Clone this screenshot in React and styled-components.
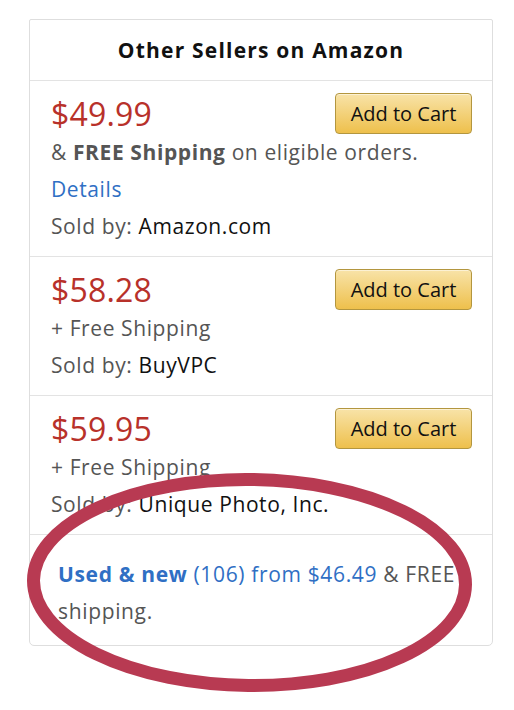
import React from 'react';
import styled, { createGlobalStyle } from 'styled-components';

const GlobalStyle = createGlobalStyle`
    body {
        margin: 0;
        background: #fff;
        font-family: "Open Sans", "Liberation Sans", sans-serif;
    }
`;

const Page = styled.div`
    position: relative;
    width: 514px;
    height: 710px;
    padding: 19px 0 0 29px;
    box-sizing: border-box;
`;

const Panel = styled.div`
    width: 464px;
    border: 1px solid #dedede;
    border-radius: 2px 2px 5px 5px;
    box-sizing: border-box;
`;

const Header = styled.div`
    height: 60px;
    display: flex;
    align-items: center;
    justify-content: center;
    font-size: 21px;
    font-weight: 700;
    letter-spacing: 1.2px;
    color: #111;
    border-bottom: 1px solid #e3e3e3;
`;

const Offer = styled.div`
    padding: 12px 20px 11px 21px;
    border-bottom: 1px solid #e3e3e3;
`;

const TopLine = styled.div`
    height: 41px;
    display: flex;
    align-items: center;
    justify-content: space-between;
`;

const Price = styled.span`
    font-size: 32px;
    line-height: 41px;
    color: #b8312a;
    letter-spacing: 0.2px;
`;

const CartButton = styled.button`
    width: 137px;
    height: 41px;
    font-family: inherit;
    font-size: 20px;
    color: #111;
    border: 1px solid #b3963f;
    border-radius: 4px;
    background: linear-gradient(to bottom, #f8e3a8, #eec04c);
    box-shadow: inset 0 1px 0 rgba(255, 255, 255, 0.5);
    padding: 0;
    cursor: pointer;
`;

const Line = styled.div`
    font-size: 21px;
    line-height: 37px;
    letter-spacing: 0.6px;
    color: #555;
    white-space: nowrap;
`;

const Strong = styled.b`
    font-weight: 700;
`;

const Link = styled.a`
    color: #2f6fc4;
    font-weight: ${(p) => (p.$bold ? 700 : 400)};
    text-decoration: none;
`;

const Seller = styled.span`
    color: #111;
`;

const Footer = styled.div`
    padding: 21px 24px 15px 28px;
    font-size: 21px;
    line-height: 37px;
    letter-spacing: 0.65px;
    color: #555;
`;

const Ring = styled.svg`
    position: absolute;
    left: 0;
    top: 0;
    pointer-events: none;
`;

const offers = [
    { price: '$49.99', eligible: true, seller: 'Amazon.com' },
    { price: '$58.28', eligible: false, seller: 'BuyVPC' },
    { price: '$59.95', eligible: false, seller: 'Unique Photo, Inc.' },
];

const App = () => {
    return (
        <Page>
            <GlobalStyle />
            <Panel>
                <Header>Other Sellers on Amazon</Header>
                {offers.map((offer, index) => (
                    <Offer key={index}>
                        <TopLine>
                            <Price>{offer.price}</Price>
                            <CartButton>Add to Cart</CartButton>
                        </TopLine>
                        {offer.eligible ? (
                            <>
                                <Line>
                                    &amp; <Strong>FREE Shipping</Strong> on eligible orders.
                                </Line>
                                <Line>
                                    <Link href="#">Details</Link>
                                </Line>
                            </>
                        ) : (
                            <Line>+ Free Shipping</Line>
                        )}
                        <Line>
                            Sold by: <Seller>{offer.seller}</Seller>
                        </Line>
                    </Offer>
                ))}
                <Footer>
                    <Link href="#" $bold>Used &amp; new</Link>{' '}
                    <Link href="#">(106) from $46.49</Link> &amp; FREE shipping.
                </Footer>
            </Panel>
            {/* red annotation ring drawn over the panel */}
            <Ring width="514" height="710" viewBox="0 0 514 710">
                <ellipse
                    cx="249.5"
                    cy="582.5"
                    rx="216"
                    ry="103"
                    fill="none"
                    stroke="#b83a52"
                    strokeWidth="13"
                    transform="rotate(0.6 249.5 582.5)"
                />
            </Ring>
        </Page>
    );
};

export default App;
